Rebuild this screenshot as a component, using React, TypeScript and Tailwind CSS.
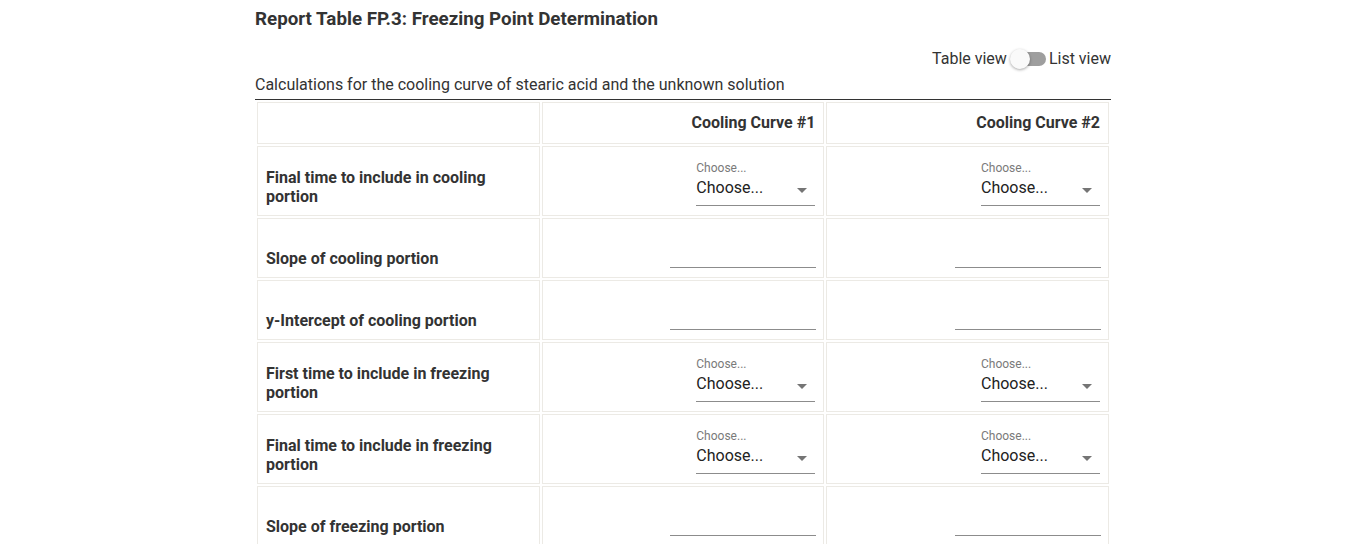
import React from "react";

const font = { fontFamily: "Roboto, 'Liberation Sans', Arial, sans-serif" };

function Select() {
  return (
    <div className="ml-auto w-[119px] border-b border-[#8c8c8c] pb-[8px]">
      <div className="text-[12px] leading-[14px] text-[#7a7a7a]">Choose...</div>
      <div className="mt-[3px] flex items-center justify-between pr-[8px]">
        <span className="text-[16px] leading-[19px] text-[#222]">Choose...</span>
        <svg width="10" height="5" viewBox="0 0 10 5" className="mt-[5px]">
          <path d="M0 0 L10 0 L5 5 Z" fill="#757575" />
        </svg>
      </div>
    </div>
  );
}

function Input() {
  return <div className="-mr-[1px] ml-auto h-[30px] w-[146px] border-b border-[#8c8c8c]" />;
}

type Row = { label: string; kind: "select" | "input" };

const rows: Row[] = [
  { label: "Final time to include in cooling portion", kind: "select" },
  { label: "Slope of cooling portion", kind: "input" },
  { label: "y-Intercept of cooling portion", kind: "input" },
  { label: "First time to include in freezing portion", kind: "select" },
  { label: "Final time to include in freezing portion", kind: "select" },
  { label: "Slope of freezing portion", kind: "input" },
];

export default function App() {
  return (
    <div className="min-h-[544px] w-full bg-white text-[#333]" style={font}>
      <div className="mx-auto w-[856px] pt-[7px]">
        <h2 className="text-[18.75px] font-bold leading-[24px] text-[#333]">
          Report Table FP.3: Freezing Point Determination
        </h2>
        <div className="mt-[16px] flex h-[24px] items-center justify-end text-[16px] text-[#333]">
          <span>Table view</span>
          <div className="relative ml-[3px] mr-[3px] h-[20px] w-[36px]">
            <div className="absolute left-[3px] top-[3px] h-[14px] w-[33px] rounded-full bg-[#9e9e9e]" />
            <div className="absolute left-0 top-0 h-[20px] w-[20px] rounded-full bg-[#fafafa] shadow-[0_1px_3px_rgba(0,0,0,0.35)]" />
          </div>
          <span>List view</span>
        </div>
        <div className="mt-[2px] border-b border-[#333] pb-[2px] text-[16px] leading-[24px] text-[#333]">
          Calculations for the cooling curve of stearic acid and the unknown solution
        </div>
        <table className="w-full table-fixed border-separate border-spacing-[2px]">
          <thead>
            <tr>
              <th className="h-[42px] border border-[#eceae5] px-[8px]" />
              <th className="h-[42px] border border-[#eceae5] px-[8px] text-right align-middle text-[16px] font-bold text-[#333]">
                Cooling Curve #1
              </th>
              <th className="h-[42px] border border-[#eceae5] px-[8px] text-right align-middle text-[16px] font-bold text-[#333]">
                Cooling Curve #2
              </th>
            </tr>
          </thead>
          <tbody>
            {rows.map((r, i) => (
              <tr key={i}>
                <td
                  className={`${r.kind === "select" ? "h-[70px]" : "h-[60px]"} border border-[#eceae5] px-[8px] pb-[9px] align-bottom`}
                >
                  <div className="max-w-[240px] text-[16px] font-bold leading-[19px] text-[#333]">
                    {r.label}
                  </div>
                </td>
                {[0, 1].map((c) => (
                  <td
                    key={c}
                    className={`${r.kind === "select" ? "h-[70px]" : "h-[60px]"} border border-[#eceae5] px-[8px] pb-[9px] align-bottom`}
                  >
                    {r.kind === "select" ? <Select /> : <Input />}
                  </td>
                ))}
              </tr>
            ))}
          </tbody>
        </table>
      </div>
    </div>
  );
}
